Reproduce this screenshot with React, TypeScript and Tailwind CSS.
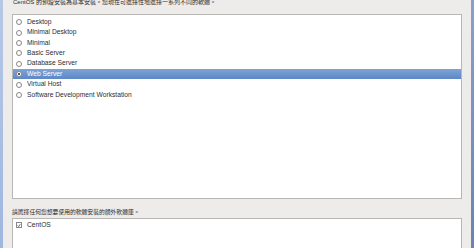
import React from "react";

const options = [
  "Desktop",
  "Minimal Desktop",
  "Minimal",
  "Basic Server",
  "Database Server",
  "Web Server",
  "Virtual Host",
  "Software Development Workstation",
];

const font = {
  fontFamily: '"Liberation Sans", "Noto Sans CJK TC", sans-serif',
};

function Radio({ checked }: { checked: boolean }) {
  return (
    <span className="flex h-[6px] w-[6px] shrink-0 items-center justify-center rounded-full border border-[#8a8886] bg-white">
      {checked && <span className="h-[2px] w-[2px] rounded-full bg-[#222]" />}
    </span>
  );
}

export default function App() {
  const selected = "Web Server";
  return (
    <div className="flex h-[248px] w-[474px] overflow-hidden" style={font}>
      <div className="w-[3px] shrink-0 bg-gradient-to-b from-[#b7c8e6] to-[#9fb6df]" />
      <div className="flex flex-1 flex-col bg-[#edeceb] px-[9px]">
        <div className="-mt-[3px] h-[10px] whitespace-nowrap pl-[1px] text-[6px] leading-[10px] text-[#2a2a2a]">
          CentOS 的預設安裝為基本安裝。您現在可選擇性地選擇一系列不同的軟體。
        </div>
        <div className="mt-[7px] flex h-[185px] flex-col border border-[#b9b7b4] bg-white pt-[2px]">
          {options.map((o) => {
            const on = o === selected;
            return (
              <div
                key={o}
                className={
                  "flex h-[10.4px] items-center gap-[5px] pl-[3px] text-[6.7px] leading-none " +
                  (on
                    ? "bg-gradient-to-b from-[#7ea3d6] to-[#5d88c6] text-white"
                    : "text-[#2e2e2e]")
                }
              >
                <Radio checked={on} />
                <span>{o}</span>
              </div>
            );
          })}
        </div>
        <div className="mt-[8px] h-[10px] whitespace-nowrap text-[5.8px] leading-[10px] text-[#2a2a2a]">
          請選擇任何您想要使用的軟體安裝的額外軟體庫。
        </div>
        <div className="mt-[1px] flex flex-1 flex-col border border-b-0 border-[#b9b7b4] bg-white pt-[1px]">
          <div className="flex h-[10.4px] items-center gap-[5px] pl-[3px] text-[6.7px] leading-none text-[#2e2e2e]">
            <span className="flex h-[6px] w-[6px] shrink-0 items-center justify-center border border-[#8a8886] bg-white">
              <svg viewBox="0 0 6 6" className="h-[5px] w-[5px]">
                <path d="M1 3 L2.5 4.5 L5 1" stroke="#222" strokeWidth="1" fill="none" />
              </svg>
            </span>
            <span>CentOS</span>
          </div>
        </div>
      </div>
      <div className="w-[3px] shrink-0 bg-gradient-to-b from-[#8aa0cc] to-[#6b82b8]" />
    </div>
  );
}
